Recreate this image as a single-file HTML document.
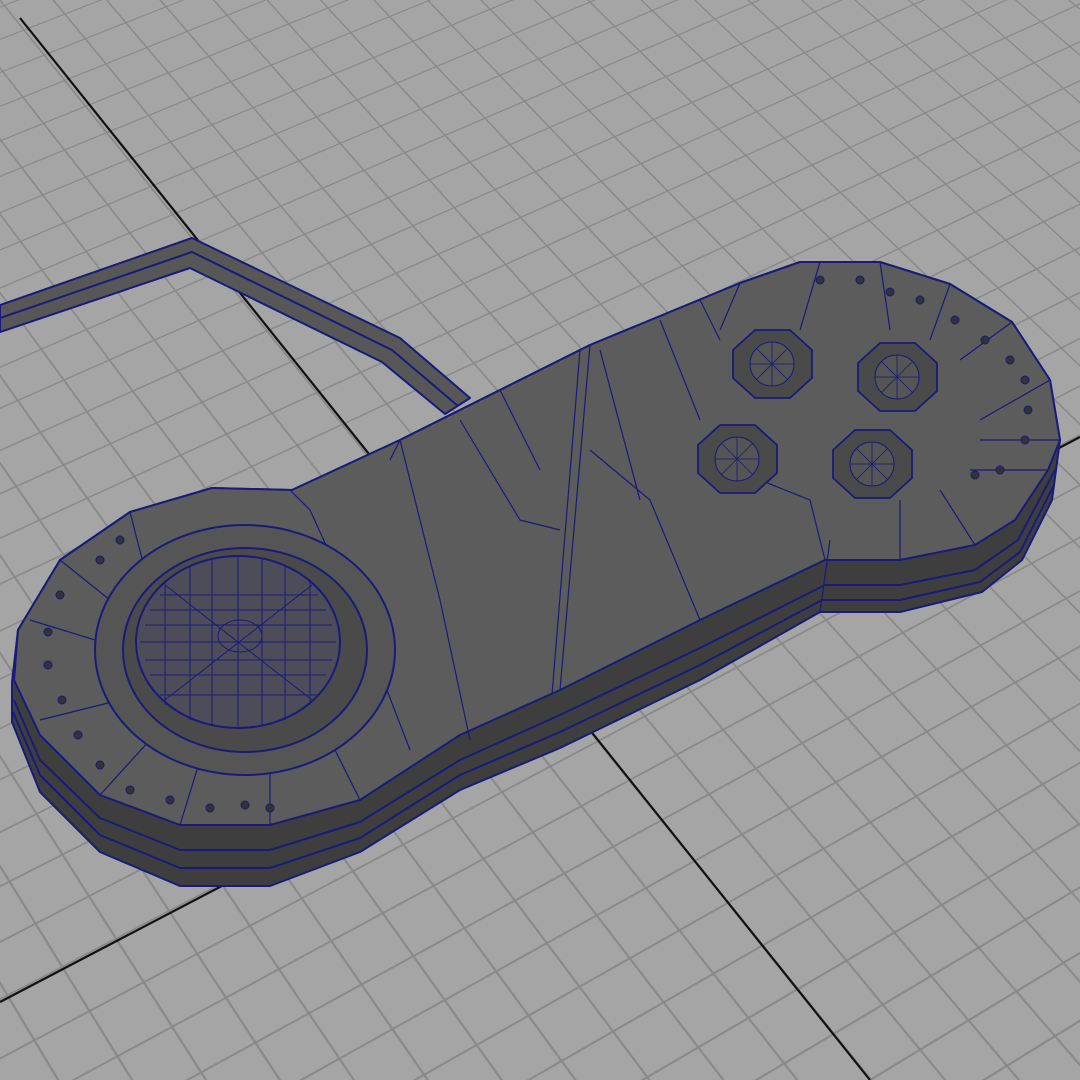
<!DOCTYPE html>
<html><head><meta charset="utf-8"><style>
html,body{margin:0;padding:0;background:#a5a5a5;width:1080px;height:1080px;overflow:hidden}
#wrap{position:relative;width:1080px;height:1080px;overflow:hidden;contain:strict;clip-path:inset(0);background:#a5a5a5}
#grid{position:absolute;left:-1113px;top:-977px;width:3360px;height:3360px;transform-origin:1680px 1680px;
transform:perspective(2600px) rotateX(36.4deg) rotateZ(57deg) translate(-560px,-336px);
background-image:linear-gradient(to right,#888 0,#888 2px,transparent 2px),linear-gradient(to bottom,#888 0,#888 2px,transparent 2px);
background-size:56px 56px;background-position:-1px -1px}
svg{position:absolute;left:0;top:0;display:block}
</style></head>
<body><div id="wrap"><div id="grid"></div>
<svg width="1080" height="1080" viewBox="0 0 1080 1080" xmlns="http://www.w3.org/2000/svg">
<g stroke="#111" stroke-width="2.2" fill="none">
<path d="M20 18 L870 1080"/>
<path d="M0 1002 L1080 437"/>
</g>
<g stroke="#1a1a7a" stroke-width="2" stroke-linejoin="round">
<path d="M0 305 L192 238 L400 338 L470 398 L445 414 L382 362 L190 268 L0 332 Z" fill="#575757"/>
<path d="M0 318 L192 252 L392 350 L458 406" fill="none"/>
</g>
<g stroke="#1a1a7a" stroke-width="2" stroke-linejoin="round">
<path d="M18 630 L60 560 L130 512 L212 488 L292 490 L400 440 L590 345 L740 283 L800 262 L880 262 L950 284 L1012 322 L1050 380 L1060 440 L1052 500 L1022 560 L982 592 L900 612 L820 612 L700 680 L560 748 L460 790 L360 852 L270 886 L180 886 L100 852 L40 792 L12 722 L12 682 Z" fill="#3e3e3e"/>
<path d="M18 630 L60 560 L130 512 L212 488 L292 490 L400 440 L590 345 L740 283 L800 262 L880 262 L950 284 L1012 322 L1050 380 L1060 440 L1048 470 L1015 520 L975 545 L900 560 L825 560 L700 620 L560 690 L460 735 L360 800 L270 825 L180 825 L100 795 L40 735 L14 680 Z" fill="#5c5c5c"/>
<path d="M14 700 L40 760 L100 818 L180 850 L270 850 L360 822 L460 760 L560 715 L700 648 L825 585 L900 585 L975 570 L1018 540 L1055 470" fill="none"/>
<path d="M13 712 L40 775 L100 835 L180 868 L270 868 L360 838 L460 775 L560 732 L700 665 L822 600 L900 600 L980 582 L1020 552 L1054 485" fill="none"/>
<path d="M590 345 L560 690 M580 350 L552 695 M290 490 L310 510 L360 620 L410 750 M400 440 L440 600 L470 740 M130 512 L150 590 M60 560 L110 600 M740 283 L720 330 M880 262 L890 330 M1012 322 L960 360 M1050 380 L980 420 M1048 470 L970 470 M820 612 L830 540 M900 560 L900 500 M700 620 L650 500 L590 450 M460 420 L520 520 L560 530 M600 350 L640 500 M660 320 L700 420 M30 620 L95 640 M40 720 L120 700 M100 795 L150 740 M180 825 L200 760 M270 825 L270 765 M360 800 L330 740 M400 440 L390 460 M500 390 L540 470 M700 300 L720 340 M820 262 L800 330 M950 284 L930 340 M1060 440 L980 440 M975 545 L940 490 M825 560 L810 500 L760 480" fill="none" stroke-width="1.2"/>
<ellipse cx="245" cy="650" rx="150" ry="125" fill="#555" />
<ellipse cx="245" cy="650" rx="122" ry="102" fill="#4a4a4a"/>
<ellipse cx="238" cy="642" rx="102" ry="86" fill="#4d4d5a"/>
<g stroke-width="1" fill="none">
<path d="M140 642 H336 M238 556 V728 M165 585 L312 700 M165 700 L312 585 M150 610 H326 M150 675 H326 M190 565 V720 M285 565 V720 M145 625 H332 M145 660 H332 M160 595 H318 M160 695 H318 M212 558 V726 M262 558 V726 M165 580 V705 M310 580 V705"/>
<ellipse cx="240" cy="636" rx="22" ry="16"/>
</g>
<g fill="#4a4a4a" stroke-width="1.8">
<polygon points="755,330 790,330 812,350 812,378 790,398 755,398 733,378 733,350"/>
<polygon points="880,343 915,343 937,363 937,391 915,411 880,411 858,391 858,363"/>
<polygon points="720,425 755,425 777,445 777,473 755,493 720,493 698,473 698,445"/>
<polygon points="855,430 890,430 912,450 912,478 890,498 855,498 833,478 833,450"/>
</g>
<g fill="#555" stroke-width="1">
<circle cx="772" cy="364" r="22"/><circle cx="897" cy="377" r="22"/><circle cx="737" cy="459" r="22"/><circle cx="872" cy="464" r="22"/>
</g>
<g stroke-width="0.8" fill="none">
<path d="M750 364H794M772 342V386M756 348L788 380M756 380L788 348"/>
<path d="M875 377H919M897 355V399M881 361L913 393M881 393L913 361"/>
<path d="M715 459H759M737 437V481M721 443L753 475M721 475L753 443"/>
<path d="M850 464H894M872 442V486M856 448L888 480M856 480L888 448"/>
</g>
<g fill="#333" stroke-width="1">
<circle cx="60" cy="595" r="4"/><circle cx="48" cy="632" r="4"/><circle cx="48" cy="665" r="4"/><circle cx="62" cy="700" r="4"/><circle cx="78" cy="735" r="4"/><circle cx="100" cy="765" r="4"/><circle cx="130" cy="790" r="4"/><circle cx="170" cy="800" r="4"/><circle cx="210" cy="808" r="4"/><circle cx="245" cy="805" r="4"/><circle cx="270" cy="808" r="4"/><circle cx="100" cy="560" r="4"/><circle cx="120" cy="540" r="4"/>
<circle cx="820" cy="280" r="4"/><circle cx="860" cy="280" r="4"/><circle cx="890" cy="292" r="4"/><circle cx="920" cy="300" r="4"/><circle cx="955" cy="320" r="4"/><circle cx="985" cy="340" r="4"/><circle cx="1010" cy="360" r="4"/><circle cx="1025" cy="380" r="4"/><circle cx="1028" cy="410" r="4"/><circle cx="1025" cy="440" r="4"/><circle cx="1000" cy="470" r="4"/><circle cx="975" cy="475" r="4"/>
</g>
</g>
</svg></div>
</body></html>
